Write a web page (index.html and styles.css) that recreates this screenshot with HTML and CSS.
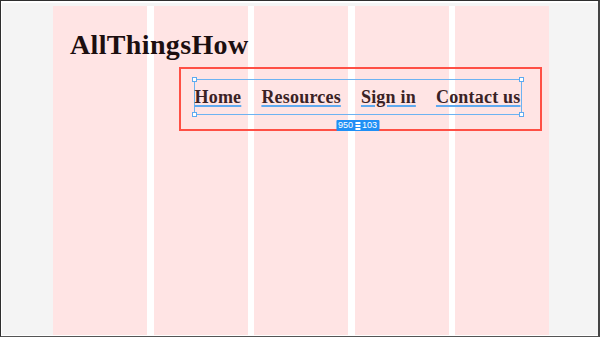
FILE: index.html
```html
<!DOCTYPE html>
<html>
<head>
<meta charset="utf-8">
<link rel="stylesheet" href="styles.css">
</head>
<body>
<div class="screen">
  <div class="canvas">
    <div class="stage">
      <div class="columns">
        <div class="col"></div><div class="col"></div><div class="col"></div><div class="col"></div><div class="col"></div>
      </div>
      <div class="content">
        <h1 class="logo">AllThingsHow</h1>
        <div class="nav-wrap">
          <nav class="nav">
            <a class="link">Home</a>
            <a class="link">Resources</a>
            <a class="link">Sign in</a>
            <a class="link">Contact us</a>
            <span class="handle tl"></span>
            <span class="handle tr"></span>
            <span class="handle bl"></span>
            <span class="handle br"></span>
            <span class="badge">950<span class="bars"><i></i><i></i><i></i></span>103</span>
          </nav>
        </div>
      </div>
    </div>
  </div>
</div>
</body>
</html>
```
FILE: styles.css
```css
html, body {
  margin: 0;
  padding: 0;
  background: #ffffff;
}
.screen {
  box-sizing: border-box;
  width: 600px;
  height: 337px;
  border-top: 1px solid #2e2e2e;
  border-left: 1px solid #2e2e2e;
  border-right: 2px solid #444444;
  border-bottom: 1px solid #555555;
  padding: 2px 0 1px 1px;
  background: #ffffff;
}
.canvas {
  height: 100%;
  background: #f4f4f4;
  padding: 3px 0 0 51px;
  box-sizing: border-box;
}
.stage {
  display: grid;
  width: 496px;
  height: 100%;
  background: #ffffff;
}
.columns, .content {
  grid-area: 1 / 1;
}
.columns {
  display: grid;
  grid-template-columns: repeat(5, 1fr);
  column-gap: 6.5px;
}
.col {
  background: #ffe4e4;
}
.content {
  display: flex;
  flex-direction: column;
  align-items: flex-start;
  padding: 25px 0 0 17px;
}
.logo {
  margin: 0;
  font-family: "Liberation Serif", serif;
  font-weight: bold;
  font-size: 28px;
  line-height: 28px;
  letter-spacing: 0.35px;
  color: #1c0f10;
}
.nav-wrap {
  margin: 8px 0 0 108.5px;
  width: 363px;
  height: 64px;
  border: 2px solid #ff4f45;
  padding: 10px 18px 0 13px;
  box-sizing: border-box;
}
.nav {
  position: relative;
  display: flex;
  justify-content: space-between;
  align-items: center;
  height: 36px;
  border: 1px solid #6db3f2;
  box-sizing: border-box;
}
.link {
  font-family: "Liberation Serif", serif;
  font-weight: bold;
  font-size: 18px;
  letter-spacing: 0.2px;
  color: #3a2225;
  text-decoration-line: underline;
  text-decoration-color: #5eaaf0;
  text-decoration-thickness: 1.5px;
  text-underline-offset: 2px;
}
.handle {
  position: absolute;
  width: 5px;
  height: 5px;
  background: #ffffff;
  border: 1px solid #5eaaf0;
  box-sizing: border-box;
}
.tl { left: -3px; top: -3px; }
.tr { right: -3px; top: -3px; }
.bl { left: -3px; bottom: -3px; }
.br { right: -3px; bottom: -3px; }
.badge {
  position: absolute;
  left: 50%;
  top: 40px;
  transform: translateX(-50%);
  display: flex;
  align-items: center;
  gap: 1px;
  height: 11px;
  padding: 0 2px;
  background: #1f8ff5;
  border-radius: 1px;
  color: #ffffff;
  font-family: "Liberation Sans", sans-serif;
  font-size: 9px;
  line-height: 11px;
}
.bars {
  display: flex;
  flex-direction: column;
  gap: 1px;
  width: 5px;
  margin: 0 1px;
}
.bars i {
  display: block;
  height: 2px;
  background: #ffffff;
}
```
